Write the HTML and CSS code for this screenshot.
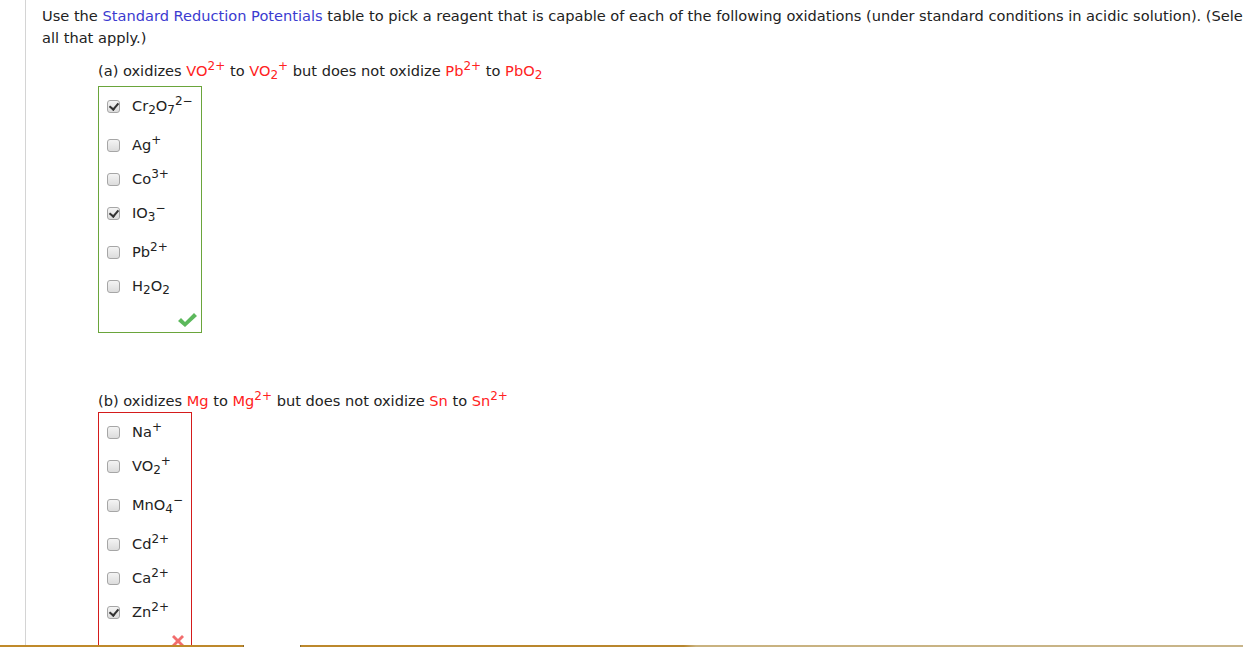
FILE: index.html
```html
<!DOCTYPE html>
<html lang="en">
  <head>
    <meta charset="utf-8" />
    <title>Standard Reduction Potentials</title>
    <link rel="stylesheet" href="styles.css">
  </head>
  <body>
    <div class="page">
      <p class="prompt">
        Use the <a href="#" class="link">Standard Reduction Potentials</a> table to pick a reagent that is capable of each of the following oxidations (under standard conditions in acidic solution). (Select all that apply.)
      </p>

      <div class="part">
        <p class="question">
          (a) oxidizes <span class="sp">VO<sup>2+</sup></span> to <span class="sp">VO<sub>2</sub><sup>+</sup></span>
          but does not oxidize <span class="sp">Pb<sup>2+</sup></span> to <span class="sp">PbO<sub>2</sub></span>
        </p>
        <div class="answers correct">
          <div class="opt"><span class="box checked"></span><span class="lbl">Cr<sub>2</sub>O<sub>7</sub><sup>2&minus;</sup></span></div>
          <div class="opt"><span class="box"></span><span class="lbl">Ag<sup>+</sup></span></div>
          <div class="opt"><span class="box"></span><span class="lbl">Co<sup>3+</sup></span></div>
          <div class="opt"><span class="box checked"></span><span class="lbl">IO<sub>3</sub><sup>&minus;</sup></span></div>
          <div class="opt"><span class="box"></span><span class="lbl">Pb<sup>2+</sup></span></div>
          <div class="opt"><span class="box"></span><span class="lbl">H<sub>2</sub>O<sub>2</sub></span></div>
          <div class="mark">
            <svg width="21" height="16" viewBox="0 0 21 16">
              <path d="M1 9 L4 6 L8 10 L17 1 L20 4 L8 15 Z" fill="#5cb85c" />
            </svg>
          </div>
        </div>
      </div>

      <div class="part part-b">
        <p class="question">
          (b) oxidizes <span class="sp">Mg</span> to <span class="sp">Mg<sup>2+</sup></span>
          but does not oxidize <span class="sp">Sn</span> to <span class="sp">Sn<sup>2+</sup></span>
        </p>
        <div class="answers wrong">
          <div class="opt"><span class="box"></span><span class="lbl">Na<sup>+</sup></span></div>
          <div class="opt"><span class="box"></span><span class="lbl">VO<sub>2</sub><sup>+</sup></span></div>
          <div class="opt"><span class="box"></span><span class="lbl">MnO<sub>4</sub><sup>&minus;</sup></span></div>
          <div class="opt"><span class="box"></span><span class="lbl">Cd<sup>2+</sup></span></div>
          <div class="opt"><span class="box"></span><span class="lbl">Ca<sup>2+</sup></span></div>
          <div class="opt"><span class="box checked"></span><span class="lbl">Zn<sup>2+</sup></span></div>
          <div class="mark mark-x">
            <svg width="16" height="16" viewBox="0 0 16 16">
              <path d="M2 4 L4 2 L8 6 L12 2 L14 4 L10 8 L14 12 L12 14 L8 10 L4 14 L2 12 L6 8 Z" fill="#f26d6d" />
            </svg>
          </div>
        </div>
      </div>
    </div>
    <div class="statusbar"><span class="tab"></span></div>
  </body>
</html>
```

FILE: styles.css
```css
* {
  box-sizing: border-box;
}
html,
body {
  margin: 0;
  height: 100%;
  overflow: hidden;
}
body {
  font-family: "DejaVu Sans", Verdana, sans-serif;
  font-size: 14.6px;
  color: #222;
  background: #fff;
  position: relative;
}
p {
  margin: 0;
}
.page {
  margin-left: 25px;
  border-left: 1px solid #d4d4d4;
  padding: 5px 0 0 16px;
  height: 100%;
}
.prompt {
  line-height: 22px;
  width: 1215px;
}
.link {
  color: #3b3bd0;
  text-decoration: none;
}
.sp {
  color: #f22;
}
sup {
  font-size: 12px;
  line-height: 0;
}
/* subscripts push the line box down a little, like the original */
sub {
  font-size: 12px;
  line-height: 20px;
  vertical-align: -3px;
}
.part {
  margin: 12px 0 0 56px;
}
.part-b {
  margin-top: 58px;
}
.question {
  line-height: 20px;
}
.answers {
  display: inline-flex;
  flex-direction: column;
  margin-top: 1px;
  padding: 2px 8px 0 8px;
  border: 1px solid;
}
.correct {
  border-color: #6aa53b;
}
.wrong {
  border-color: #d41b1b;
}
.opt {
  display: flex;
  align-items: flex-start;
  gap: 12px;
  padding: 8px 0;
}
.lbl {
  line-height: 18px;
}
.box {
  width: 13px;
  height: 13px;
  margin-top: 3px;
  flex: none;
  border: 1px solid #a6a6a6;
  border-radius: 3px;
  background: linear-gradient(#f4f4f4, #dcdcdc);
  position: relative;
}
.checked::after {
  content: "";
  position: absolute;
  left: 3px;
  top: 0px;
  width: 4px;
  height: 7px;
  border: solid #333;
  border-width: 0 2px 2px 0;
  transform: rotate(40deg);
}
.mark {
  display: flex;
  justify-content: flex-end;
  padding: 4px 0 4px;
  margin-right: -5px;
}
.mark-x {
  margin-right: -3px;
}
.statusbar {
  position: absolute;
  left: 0;
  right: 0;
  bottom: 0;
  height: 2px;
  background: linear-gradient(to right, #c08a2a, #b8862e 55%, #c9b27f 56%, #c8b58a);
}
.tab {
  position: absolute;
  left: 243px;
  width: 58px;
  top: 0;
  height: 2px;
  background: #fff;
  border-left: 1px solid #8a6a30;
  border-right: 1px solid #8a6a30;
}
```
